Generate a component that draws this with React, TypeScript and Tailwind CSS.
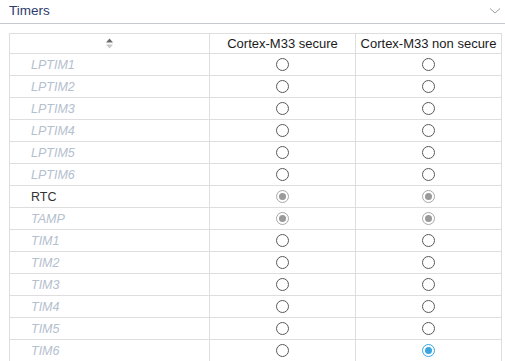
import React from 'react';

type Mode = 'off' | 'locked' | 'on';

interface Row {
  name: string;
  enabled: boolean;
  secure: Mode;
  nonSecure: Mode;
}

const rows: Row[] = [
  { name: 'LPTIM1', enabled: false, secure: 'off', nonSecure: 'off' },
  { name: 'LPTIM2', enabled: false, secure: 'off', nonSecure: 'off' },
  { name: 'LPTIM3', enabled: false, secure: 'off', nonSecure: 'off' },
  { name: 'LPTIM4', enabled: false, secure: 'off', nonSecure: 'off' },
  { name: 'LPTIM5', enabled: false, secure: 'off', nonSecure: 'off' },
  { name: 'LPTIM6', enabled: false, secure: 'off', nonSecure: 'off' },
  { name: 'RTC', enabled: true, secure: 'locked', nonSecure: 'locked' },
  { name: 'TAMP', enabled: false, secure: 'locked', nonSecure: 'locked' },
  { name: 'TIM1', enabled: false, secure: 'off', nonSecure: 'off' },
  { name: 'TIM2', enabled: false, secure: 'off', nonSecure: 'off' },
  { name: 'TIM3', enabled: false, secure: 'off', nonSecure: 'off' },
  { name: 'TIM4', enabled: false, secure: 'off', nonSecure: 'off' },
  { name: 'TIM5', enabled: false, secure: 'off', nonSecure: 'off' },
  { name: 'TIM6', enabled: false, secure: 'off', nonSecure: 'on' },
];

function Radio({ mode }: { mode: Mode }) {
  if (mode === 'locked') {
    return (
      <span className="flex h-[13px] w-[13px] items-center justify-center rounded-full border border-[#a8a8a8]">
        <span className="h-[7px] w-[7px] rounded-full bg-[#9a9a9a]" />
      </span>
    );
  }
  if (mode === 'on') {
    return (
      <span className="flex h-[13px] w-[13px] items-center justify-center rounded-full border border-[#3aa5df]">
        <span className="h-[7px] w-[7px] rounded-full bg-[#3aa5df]" />
      </span>
    );
  }
  return <span className="block h-[13px] w-[13px] rounded-full border border-[#5a5a5a]" />;
}

export default function App() {
  return (
    <div className="h-[361px] w-[505px] overflow-hidden bg-white font-['Liberation_Sans',Arial,sans-serif] text-[12px]">
      <div className="flex h-[24px] items-center justify-between border-b border-[#c4c7cc] pl-[9px] pr-[4px]">
        <span className="text-[13.5px] text-[#2e3b6e]">Timers</span>
        <svg width="12" height="8" viewBox="0 0 12 8" className="mb-[1px]">
          <path d="M1 1.5 L6 6 L11 1.5" fill="none" stroke="#9aa0a8" strokeWidth="1" />
        </svg>
      </div>
      <div className="pl-[9px] pt-[9px]">
        <table className="w-[492px] table-fixed border-collapse">
          <colgroup>
            <col className="w-[200px]" />
            <col className="w-[146px]" />
            <col className="w-[146px]" />
          </colgroup>
          <thead>
            <tr className="h-[20px]">
              <th className="border border-[#dedede] p-0 leading-[18px]">
                <svg width="9" height="11" viewBox="0 0 9 11" className="mx-auto block">
                  <path d="M4.5 0.5 L8 4.5 L1 4.5 Z" fill="#6b6b6b" />
                  <path d="M4.5 10.5 L8 6.5 L1 6.5 Z" fill="#c8c8c8" />
                </svg>
              </th>
              <th className="border border-[#dedede] p-0 text-center text-[13px] leading-[18px] font-normal text-[#1a1a1a]">Cortex-M33 secure</th>
              <th className="border border-[#dedede] p-0 text-center text-[13px] leading-[18px] font-normal text-[#1a1a1a]">Cortex-M33 non secure</th>
            </tr>
          </thead>
          <tbody>
            {rows.map((r) => (
              <tr key={r.name} className="h-[22px]">
                <td
                  className={
                    r.enabled
                      ? 'border border-[#dedede] p-0 pl-[21px] text-[12.5px] leading-[18px] text-[#333333]'
                      : 'border border-[#dedede] p-0 pl-[21px] text-[12.5px] leading-[18px] italic text-[#b4c0ce]'
                  }
                >
                  {r.name}
                </td>
                <td className="border border-[#dedede] p-0">
                  <div className="flex justify-center">
                    <Radio mode={r.secure} />
                  </div>
                </td>
                <td className="border border-[#dedede] p-0">
                  <div className="flex justify-center">
                    <Radio mode={r.nonSecure} />
                  </div>
                </td>
              </tr>
            ))}
          </tbody>
        </table>
      </div>
    </div>
  );
}
